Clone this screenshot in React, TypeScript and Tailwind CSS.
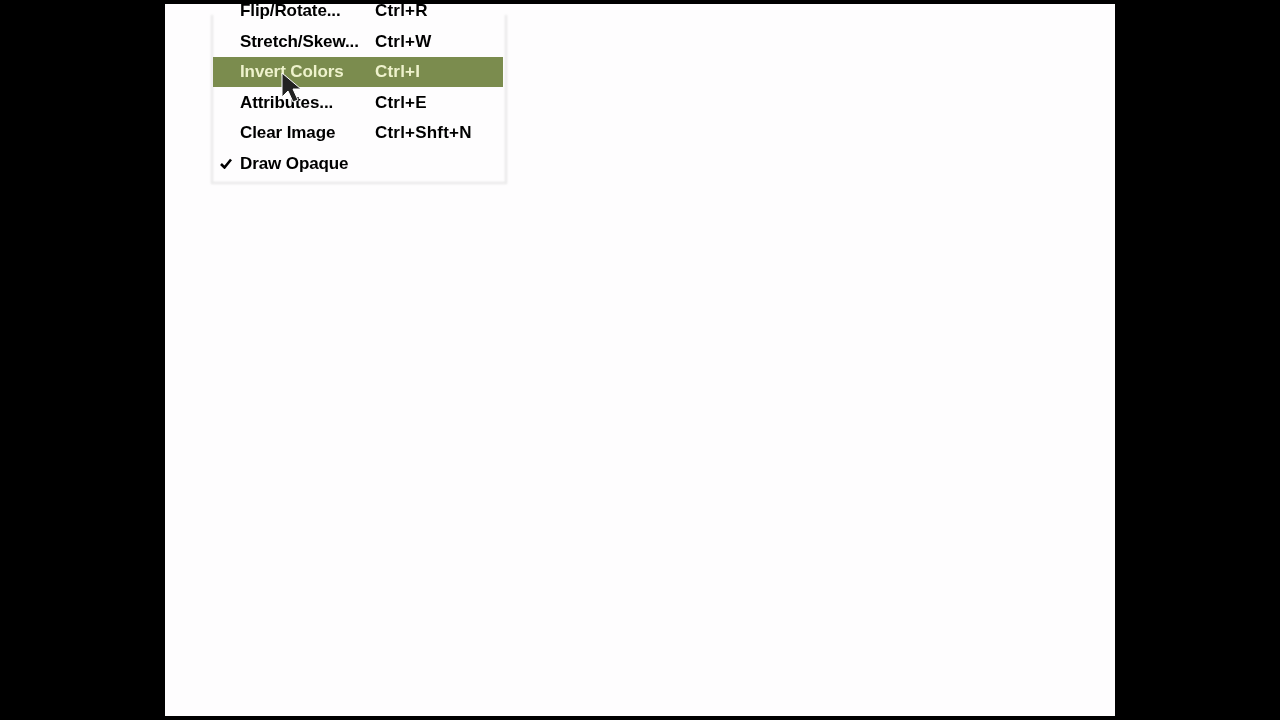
const rows = [
  { label: 'Flip/Rotate...', keys: 'Ctrl+R' },
  { label: 'Stretch/Skew...', keys: 'Ctrl+W' },
  { label: 'Invert Colors', keys: 'Ctrl+I', active: true },
  { label: 'Attributes...', keys: 'Ctrl+E' },
  { label: 'Clear Image', keys: 'Ctrl+Shft+N' },
  { label: 'Draw Opaque', keys: '', checked: true },
]

export default function App() {
  return (
    <div className="h-[720px] w-[1280px] overflow-hidden bg-black pt-1 pl-[165px] font-['Liberation_Sans',sans-serif]">
      <div className="h-[712px] w-[950px] overflow-hidden bg-[#fefdfe] pl-[46px]">
        <div className="relative -mt-[9px] h-[189px] w-[296px] pr-1 pl-[2px]">
          <div className="absolute inset-x-0 top-[20px] bottom-0 border-x-2 border-b-2 border-[#e6e6e6] blur-[0.8px]" />
          <div className="pt-[0.4px] blur-[0.6px]">
            {rows.map((row) => (
              <div
                key={row.label}
                className={`flex h-[30.6px] items-center text-[17px] font-bold tracking-[-0.1px] ${
                  row.active ? 'bg-[#7b8c4e] text-[#eef2cc]' : 'text-black'
                }`}
              >
                <span className="flex w-[27px] justify-center pr-[2px]">
                  {row.checked && (
                    <svg width="12" height="11" viewBox="0 0 12 11">
                      <path d="M1 6l3.500 3.500L11 1.500" fill="none" stroke="#000" strokeWidth="2.600" />
                    </svg>
                  )}
                </span>
                <span className="w-[135px] whitespace-nowrap">{row.label}</span>
                <span className="whitespace-nowrap tracking-[0.2px]">{row.keys}</span>
              </div>
            ))}
          </div>
          <svg className="absolute top-[77px] left-[69px] blur-[0.5px]" width="24" height="32" viewBox="0 0 24 32">
            <path d="M2 1v24l6-6 5 11 5-2-5-11h8z" fill="#222" stroke="#fff" strokeWidth="1" />
          </svg>
        </div>
      </div>
    </div>
  )
}
